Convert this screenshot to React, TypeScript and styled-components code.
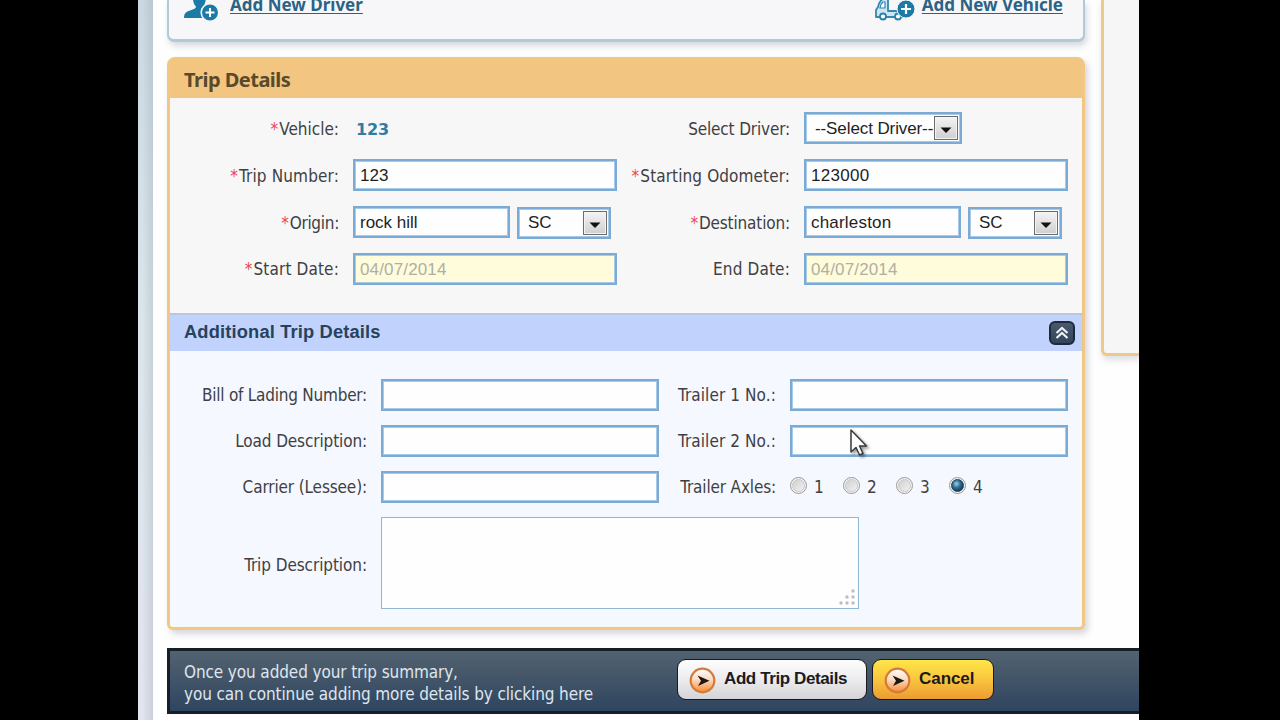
import type { ReactNode } from "react";
import styled, { createGlobalStyle } from "styled-components";

const tahoma = `"DejaVu Sans Condensed", "DejaVu Sans", sans-serif`;
const arial = `"Liberation Sans", Arial, sans-serif`;

const GlobalStyle = createGlobalStyle`
  * { box-sizing: border-box; }
  body { margin: 0; background: #000; overflow: hidden; }
`;

const Screen = styled.div`
  position: relative;
  display: flex;
  width: 1280px;
  height: 720px;
  padding: 0 141px 0 138px;
  background: #000;
  overflow: hidden;
`;

const Gutter = styled.div`
  flex: none;
  width: 15px;
  background:
    linear-gradient(90deg, rgba(160, 170, 185, 0) 30%, rgba(150, 160, 178, 0.3)),
    linear-gradient(#c9d8e0, #dbe6ea 45%, #e2e4ee);
`;

const Page = styled.main`
  flex: 1;
  min-width: 0;
  padding-left: 14px;
  background: #fefefe;
  overflow: hidden;
`;

const Columns = styled.div`
  display: flex;
  gap: 16px;
  height: 648px;
`;

const MainColumn = styled.div`
  flex: none;
  display: flex;
  flex-direction: column;
  gap: 15px;
  width: 918px;
`;

const SidePanel = styled.aside`
  flex: 1;
  height: 356px;
  border: solid #edc98c;
  border-width: 0 0 3px 3px;
  border-radius: 0 0 0 6px;
  background: #f6f6f6;
  box-shadow: 1px 4px 6px rgba(60, 60, 90, 0.16);
`;

const LinkPanel = styled.section`
  display: flex;
  justify-content: space-between;
  height: 42px;
  padding: 0 20px 0 15px;
  border: solid #b0cad8;
  border-width: 0 2px 3px;
  border-radius: 0 0 7px 7px;
  background: #f7f7f9;
  box-shadow: 2px 4px 6px rgba(60, 70, 100, 0.2);
`;

const LinkGroup = styled.div<{ $gap: number }>`
  display: flex;
  align-items: flex-start;
  gap: ${(p) => p.$gap}px;
  height: 24px;
  margin-top: -8px;
`;

const PanelLink = styled.a`
  padding-top: 1px;
  font: bold 17px/24px "Noto Sans", sans-serif;
  color: #2a6384;
  white-space: nowrap;
  text-decoration: underline;
  text-decoration-thickness: 1px;
  text-underline-offset: 2px;
`;

const TripPanel = styled.section`
  height: 573px;
  border: 3px solid #f0c783;
  border-radius: 8px 8px 6px 6px;
  background: #f7f7f7;
  box-shadow: 3px 4px 6px rgba(60, 60, 90, 0.2);
`;

const TripHeader = styled.h2`
  height: 38px;
  margin: 0;
  padding-left: 14px;
  background: #f2c580;
  color: #594a2c;
  font: bold 20px/40px "Noto Sans", sans-serif;
  letter-spacing: -0.52px;
`;

const TripFields = styled.div`
  display: flex;
  flex-direction: column;
  gap: 15px;
  height: 215px;
  padding-top: 14px;
`;

const MoreHeader = styled.div`
  display: flex;
  align-items: center;
  justify-content: space-between;
  height: 38px;
  padding: 0 7px 0 14px;
  border-top: 2px solid #b9c7e6;
  background: #c1d3fd;
`;

const MoreTitle = styled.h3`
  margin: 0;
  padding-bottom: 2px;
  color: #27425c;
  font: bold 18.3px/34px ${arial};
  letter-spacing: 0.16px;
`;

const CollapseButton = styled.button`
  display: grid;
  place-items: center;
  width: 26px;
  height: 24px;
  margin-bottom: 1px;
  padding: 0;
  border: 2px solid #1c2a3c;
  border-radius: 6px;
  background: linear-gradient(#4a596c, #34445a);
`;

const MoreFields = styled.div`
  display: flex;
  flex-direction: column;
  gap: 14px;
  height: 275px;
  padding-top: 28px;
  background: #f5f8fe;
`;

const FieldRow = styled.div`
  display: flex;
  height: 32px;
`;

const Label = styled.label<{ $w: number; $track?: number; $drop?: number }>`
  flex: none;
  width: ${(p) => p.$w}px;
  padding-top: ${(p) => p.$drop ?? 0}px;
  color: #404043;
  font: 17px/32px ${tahoma};
  letter-spacing: ${(p) => p.$track ?? 0}px;
  text-align: right;
  white-space: nowrap;
`;

const Star = styled.span`
  color: #ee4358;
  margin-right: 1px;
`;

const Field = styled.div<{ $w: number }>`
  display: flex;
  flex: none;
  gap: 7px;
  width: ${(p) => p.$w}px;
  margin-left: 14px;
`;

const VehicleValue = styled.span`
  padding: 2px 0 0 3px;
  color: #2f7ca4;
  font: bold 16px/32px "DejaVu Sans", sans-serif;
  letter-spacing: -0.1px;
`;

const TextInput = styled.input<{ $w: number; $track?: number }>`
  width: ${(p) => p.$w}px;
  height: 32px;
  padding: 2px 5px 0;
  border: 2px solid #7babd5;
  border-radius: 0;
  background: #fefefe;
  box-shadow: inset 0 0 0 1px #a9cae6;
  color: #1f1f1f;
  font: 17px ${arial};
  letter-spacing: ${(p) => p.$track ?? 0}px;
  outline: none;

  &:disabled {
    background: #fffcdc;
    color: #b0afa5;
  }
`;

const SelectBox = styled.div<{ $w: number; $drop?: number }>`
  display: flex;
  align-items: center;
  justify-content: space-between;
  flex: none;
  width: ${(p) => p.$w}px;
  height: 32px;
  margin-top: ${(p) => p.$drop ?? 0}px;
  padding: 0 2px 0 9px;
  border: 2px solid #7babd5;
  background: #fefefe;
  box-shadow: inset 0 0 0 1px #a9cae6;
  color: #222;
  font: 17px/24px ${arial};
  letter-spacing: -0.1px;
  white-space: nowrap;
`;

const SelectText = styled.span<{ $lift: number }>`
  padding-top: 2px;
  padding-bottom: ${(p) => p.$lift}px;
`;

const SelectArrow = styled.span`
  display: grid;
  place-items: center;
  flex: none;
  width: 24px;
  height: 24px;
  padding-top: 3px;
  border: 1px solid #6c6c6c;
  background: linear-gradient(#f4f4f4, #cfcfcf);
  box-shadow: inset 0 0 0 1px #f3f3f3;
`;

const RadioGroup = styled.div`
  display: flex;
  gap: 18px;
  margin-left: 14px;
`;

const RadioOption = styled.label`
  display: flex;
  gap: 7px;
  width: 35px;
  color: #404043;
  font: 17px/32px ${tahoma};
`;

const RadioDot = styled.span<{ $on?: boolean }>`
  display: grid;
  place-items: center;
  flex: none;
  width: 17px;
  height: 17px;
  margin-top: 6px;
  border: 1px solid #9a9a9c;
  border-radius: 50%;
  background: #f3f3f3;

  &::after {
    content: "";
    width: 11px;
    height: 11px;
    border-radius: 50%;
    border: 1px solid ${(p) => (p.$on ? "#1d3b55" : "#c9c9c9")};
    background: ${(p) =>
      p.$on
        ? "radial-gradient(circle at 40% 35%, #9ed0e8, #2f6f95 40%, #143551 80%)"
        : "linear-gradient(135deg, #cfcfcf, #f2f2f2)"};
  }
`;

const DescriptionRow = styled.div`
  display: flex;
  align-items: center;
  height: 92px;
`;

const DescriptionBox = styled.div`
  display: flex;
  align-items: flex-end;
  justify-content: flex-end;
  width: 478px;
  height: 92px;
  margin-left: 14px;
  padding: 2px;
  border: 1.5px solid #8fb6d2;
  background: #fefefe;
`;

const ActionBar = styled.footer`
  display: flex;
  height: 66px;
  padding-left: 14px;
  border: solid #161f29;
  border-width: 3px 0 3px 3px;
  background: linear-gradient(#526271, #435568 45%, #2e4560);
`;

const ActionNote = styled.p`
  width: 493px;
  margin: 0;
  padding-top: 10px;
  color: #dfe6ee;
  font: 17px/22px ${tahoma};
  letter-spacing: -0.11px;
  white-space: nowrap;
`;

const ActionButton = styled.button<{ $w: number; $gold?: boolean; $track?: number }>`
  display: flex;
  align-items: center;
  gap: 8px;
  width: ${(p) => p.$w}px;
  height: 41px;
  margin: 8px 5px 0 0;
  padding: 0 0 0 11px;
  border: 1.5px solid #171a20;
  border-radius: 9px;
  background: ${(p) =>
    p.$gold
      ? "linear-gradient(#ffe548, #fbc93f 45%, #eb9c32)"
      : "linear-gradient(#fdfdfd, #ececee 50%, #d4d4d8)"};
  color: #1c1a1c;
  font: bold 17px/36px ${arial};
  letter-spacing: ${(p) => p.$track ?? 0}px;
  white-space: nowrap;
`;

const ButtonText = styled.span`
  padding-bottom: 1px;
`;

const BadgeSvg = styled.svg`
  flex: none;
  margin-top: 2px;
`;

const Pointer = styled.svg`
  position: absolute;
  left: 848px;
  top: 427px;
  filter: drop-shadow(2px 2px 1.5px rgba(0, 0, 0, 0.4));
`;

function DriverIcon() {
  return (
    <svg width="35" height="30" viewBox="0 0 35 30">
      <path
        d="M9 4h13c0 7-2 10-4 12l-.5 2c3 1 3.500 3 4 8H0c0-5 2-6 6-7.500 4-1.500 6-2 6-4C9 12 9 8 9 4z"
        fill="#1c7ba6"
      />
      <circle cx="26" cy="20.500" r="8.800" fill="#1c7ba6" stroke="#f7f7f9" strokeWidth="1.600" />
      <path d="M26 16v9M21.500 20.500h9" stroke="#fff" strokeWidth="2" />
    </svg>
  );
}

function VehicleIcon() {
  return (
    <svg width="40" height="30" viewBox="0 0 40 30">
      <path
        d="M13 19V7H8C5 8 4 11 3 15l-2 3v7h31v-6z"
        fill="#cfe6f2"
        stroke="#3288b0"
        strokeWidth="1.800"
        strokeLinejoin="round"
      />
      <path d="M10 10v6H5c.5-3 1.500-5 3-6z" fill="#fff" stroke="#3288b0" strokeWidth="1.200" />
      <circle cx="8" cy="24.500" r="3" fill="#fff" stroke="#2c7fa8" strokeWidth="1.800" />
      <circle cx="23" cy="24.500" r="3" fill="#fff" stroke="#2c7fa8" strokeWidth="1.800" />
      <circle cx="31" cy="17" r="9" fill="#1c7ba6" stroke="#f7f7f9" strokeWidth="1" />
      <path d="M31 12v10M26 17h10" stroke="#fff" strokeWidth="2.200" />
    </svg>
  );
}

function ArrowBadge({ id }: { id: string }) {
  return (
    <BadgeSvg width="27" height="27" viewBox="0 0 27 27">
      <defs>
        <linearGradient id={id} x1="0" y1="0" x2="0" y2="1">
          <stop offset="0" stopColor="#ffffff" />
          <stop offset="0.45" stopColor="#fbdcc4" />
          <stop offset="1" stopColor="#f68a2e" />
        </linearGradient>
      </defs>
      <circle cx="13.500" cy="13.500" r="11.800" fill={`url(#${id})`} stroke="#d5793a" strokeWidth="2.200" />
      <path d="M8.500 8.500l12 5.200L9 19l3-5.300z" fill="#1d1714" />
    </BadgeSvg>
  );
}

function Select({ w, drop, lift = 0, children }: { w: number; drop?: number; lift?: number; children: ReactNode }) {
  return (
    <SelectBox $w={w} $drop={drop}>
      <SelectText $lift={lift}>{children}</SelectText>
      <SelectArrow>
        <svg width="12" height="8" viewBox="0 0 12 8">
          <path d="M0.500 1.500h11L6 7z" fill="#111" />
        </svg>
      </SelectArrow>
    </SelectBox>
  );
}

export default function App() {
  return (
    <Screen>
      <GlobalStyle />
      <Gutter />
      <Page>
        <Columns>
          <MainColumn>
            <LinkPanel>
              <LinkGroup $gap={11}>
                <DriverIcon />
                <PanelLink>Add New Driver</PanelLink>
              </LinkGroup>
              <LinkGroup $gap={7}>
                <VehicleIcon />
                <PanelLink>Add New Vehicle</PanelLink>
              </LinkGroup>
            </LinkPanel>
            <TripPanel>
              <TripHeader>Trip Details</TripHeader>
              <TripFields>
                <FieldRow>
                  <Label $w={169} $drop={1}><Star>*</Star>Vehicle:</Label>
                  <Field $w={264}><VehicleValue>123</VehicleValue></Field>
                  <Label $w={173} $track={-0.15} $drop={1}>Select Driver:</Label>
                  <Field $w={264}><Select w={158}>--Select Driver--</Select></Field>
                </FieldRow>
                <FieldRow>
                  <Label $w={169} $track={0.15} $drop={1}><Star>*</Star>Trip Number:</Label>
                  <Field $w={264}><TextInput $w={264} defaultValue="123" /></Field>
                  <Label $w={173} $track={0.1} $drop={1}><Star>*</Star>Starting Odometer:</Label>
                  <Field $w={264}><TextInput $w={264} defaultValue="123000" $track={0.3} /></Field>
                </FieldRow>
                <FieldRow>
                  <Label $w={169} $drop={1} $track={-0.3}><Star>*</Star>Origin:</Label>
                  <Field $w={264}>
                    <TextInput $w={157} defaultValue="rock hill" />
                    <Select w={94} drop={1} lift={3}>SC</Select>
                  </Field>
                  <Label $w={173} $track={-0.15} $drop={1}><Star>*</Star>Destination:</Label>
                  <Field $w={264}>
                    <TextInput $w={157} defaultValue="charleston" $track={0.2} />
                    <Select w={94} drop={1} lift={3}>SC</Select>
                  </Field>
                </FieldRow>
                <FieldRow>
                  <Label $w={169} $track={0.15}><Star>*</Star>Start Date:</Label>
                  <Field $w={264}><TextInput $w={264} defaultValue="04/07/2014" $track={0.15} disabled /></Field>
                  <Label $w={173} $track={0.15}>End Date:</Label>
                  <Field $w={264}><TextInput $w={264} defaultValue="04/07/2014" $track={0.15} disabled /></Field>
                </FieldRow>
              </TripFields>
              <MoreHeader>
                <MoreTitle>Additional Trip Details</MoreTitle>
                <CollapseButton aria-label="Collapse">
                  <svg width="14" height="13" viewBox="0 0 14 13" fill="none" stroke="#eef3f7" strokeWidth="2.100">
                    <path d="M1.500 7L7 2l5.500 5M1.500 12L7 7l5.500 5" />
                  </svg>
                </CollapseButton>
              </MoreHeader>
              <MoreFields>
                <FieldRow>
                  <Label $w={197} $track={-0.23}>Bill of Lading Number:</Label>
                  <Field $w={278}><TextInput $w={278} /></Field>
                  <Label $w={117} $track={0.1}>Trailer 1 No.:</Label>
                  <Field $w={278}><TextInput $w={278} /></Field>
                </FieldRow>
                <FieldRow>
                  <Label $w={197} $track={-0.12}>Load Description:</Label>
                  <Field $w={278}><TextInput $w={278} /></Field>
                  <Label $w={117} $track={0.1}>Trailer 2 No.:</Label>
                  <Field $w={278}><TextInput $w={278} /></Field>
                </FieldRow>
                <FieldRow>
                  <Label $w={197} $track={-0.13}>Carrier (Lessee):</Label>
                  <Field $w={278}><TextInput $w={278} /></Field>
                  <Label $w={117} $track={-0.15}>Trailer Axles:</Label>
                  <RadioGroup>
                    <RadioOption><RadioDot />1</RadioOption>
                    <RadioOption><RadioDot />2</RadioOption>
                    <RadioOption><RadioDot />3</RadioOption>
                    <RadioOption><RadioDot $on />4</RadioOption>
                  </RadioGroup>
                </FieldRow>
                <DescriptionRow>
                  <Label $w={197} $drop={3} $track={-0.08}>Trip Description:</Label>
                  <DescriptionBox>
                    <svg width="18" height="18" viewBox="0 0 18 18" fill="#bdbdbd">
                      <circle cx="15" cy="3" r="1.700" />
                      <circle cx="9" cy="9" r="1.700" />
                      <circle cx="15" cy="9" r="1.700" />
                      <circle cx="3" cy="15" r="1.700" />
                      <circle cx="9" cy="15" r="1.700" />
                      <circle cx="15" cy="15" r="1.700" />
                    </svg>
                  </DescriptionBox>
                </DescriptionRow>
              </MoreFields>
            </TripPanel>
          </MainColumn>
          <SidePanel />
        </Columns>
        <ActionBar>
          <ActionNote>
            Once you added your trip summary,
            <br />
            you can continue adding more details by clicking here
          </ActionNote>
          <ActionButton $w={190} $track={-0.4}>
            <ArrowBadge id="badge-add" />
            <ButtonText>Add Trip Details</ButtonText>
          </ActionButton>
          <ActionButton $w={122} $gold $track={-0.05}>
            <ArrowBadge id="badge-cancel" />
            <ButtonText>Cancel</ButtonText>
          </ActionButton>
        </ActionBar>
      </Page>
      <Pointer width="22" height="30" viewBox="0 0 22 30">
        <path
          d="M3 3v22l5-4.500 3.500 7.500 3.500-1.500-3.500-7.500H18.500z"
          fill="#fff"
          stroke="#3a3a3a"
          strokeWidth="1.500"
          strokeLinejoin="round"
        />
      </Pointer>
    </Screen>
  );
}
